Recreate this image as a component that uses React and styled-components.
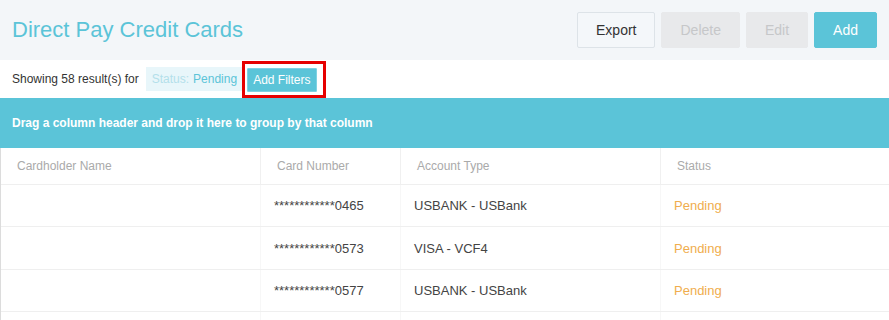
import React from 'react';
import styled, { createGlobalStyle } from 'styled-components';

const ACCENT = '#5bc4d8';

const GlobalStyle = createGlobalStyle`
  body {
    margin: 0;
    background: #fff;
    font-family: "Liberation Sans", Arial, sans-serif;
  }
`;

// 页面头部
const Header = styled.div`
  height: 60px;
  background: #f3f6f9;
  display: flex;
  align-items: center;
  justify-content: space-between;
  padding: 0 12px;
`;

const Title = styled.h1`
  margin: 0;
  font-size: 22px;
  font-weight: normal;
  color: ${ACCENT};
`;

const Actions = styled.div`
  display: flex;
  gap: 6px;
`;

const VARIANTS = {
  default: { bg: '#f4f7fa', color: '#333', border: '#dde3e8' },
  disabled: { bg: '#e8e9eb', color: '#c6c7c9', border: '#e8e9eb' },
  primary: { bg: ACCENT, color: '#fff', border: ACCENT },
};

const Button = styled.button`
  height: 36px;
  padding: 0 18px;
  border-radius: 2px;
  font-family: inherit;
  font-size: 14px;
  background: ${(p) => VARIANTS[p.variant].bg};
  color: ${(p) => VARIANTS[p.variant].color};
  border: 1px solid ${(p) => VARIANTS[p.variant].border};
  cursor: ${(p) => (p.variant === 'disabled' ? 'not-allowed' : 'pointer')};
`;

// 筛选行
const FilterRow = styled.div`
  height: 38px;
  display: flex;
  align-items: center;
  padding: 0 12px;
  font-size: 12px;
  color: #333;
`;

const ResultText = styled.span`
  margin-right: 7px;
`;

const Chip = styled.span`
  height: 24px;
  display: inline-flex;
  align-items: center;
  padding: 0 5px 0 6px;
  background: #e8f6fa;
  color: ${ACCENT};
  font-size: 12px;
`;

const ChipLabel = styled.span`
  color: #b3e0ea;
  margin-right: 4px;
`;

// 红色标注框
const Highlight = styled.div`
  border: 3px solid #e60000;
  padding: 4px 6px 3px 2px;
  display: flex;
`;

const FilterButton = styled.button`
  height: 24px;
  padding: 0 5px;
  border: 1px solid #7fd2e2;
  border-radius: 1px;
  background: ${ACCENT};
  color: #fff;
  font-family: inherit;
  font-size: 12px;
`;

// 分组拖放栏
const GroupBar = styled.div`
  height: 50px;
  background: ${ACCENT};
  color: #fff;
  font-weight: bold;
  font-size: 12px;
  display: flex;
  align-items: center;
  padding: 0 12px;
`;

// 表格
const Table = styled.div`
  border-left: 1px solid #dcdcdc;
`;

const Row = styled.div`
  display: grid;
  grid-template-columns: 260px 140px 260px 1fr;
  height: ${(p) => (p.head ? '36px' : '41.35px')};
  border-bottom: 1px solid #efefef;
`;

const Cell = styled.div`
  display: flex;
  align-items: center;
  padding-left: ${(p) => (p.head ? '16px' : '13px')};
  font-size: ${(p) => (p.head ? '12px' : '13px')};
  color: ${(p) => (p.head ? '#aaa' : p.status ? '#f0ad4e' : '#444')};
  border-right: 1px solid ${(p) => (p.head ? '#f0f0f0' : '#f7f7f7')};
  &:last-child {
    border-right: none;
  }
`;

const COLUMNS = ['Cardholder Name', 'Card Number', 'Account Type', 'Status'];

const ROWS = [
  { name: '', card: '************0465', type: 'USBANK - USBank', status: 'Pending' },
  { name: '', card: '************0573', type: 'VISA - VCF4', status: 'Pending' },
  { name: '', card: '************0577', type: 'USBANK - USBank', status: 'Pending' },
  { name: '', card: '', type: '', status: '' },
];

const App = () => (
  <>
    <GlobalStyle />
    <Header>
      <Title>Direct Pay Credit Cards</Title>
      <Actions>
        <Button variant="default">Export</Button>
        <Button variant="disabled">Delete</Button>
        <Button variant="disabled">Edit</Button>
        <Button variant="primary">Add</Button>
      </Actions>
    </Header>
    <FilterRow>
      <ResultText>Showing 58 result(s) for</ResultText>
      <Chip>
        <ChipLabel>Status:</ChipLabel>Pending
      </Chip>
      <Highlight>
        <FilterButton>Add Filters</FilterButton>
      </Highlight>
    </FilterRow>
    <GroupBar>Drag a column header and drop it here to group by that column</GroupBar>
    <Table>
      <Row head>
        {COLUMNS.map((c) => (
          <Cell head key={c}>{c}</Cell>
        ))}
      </Row>
      {ROWS.map((r, i) => (
        <Row key={i}>
          <Cell>{r.name}</Cell>
          <Cell>{r.card}</Cell>
          <Cell>{r.type}</Cell>
          <Cell status>{r.status}</Cell>
        </Row>
      ))}
    </Table>
  </>
);

export default App;
